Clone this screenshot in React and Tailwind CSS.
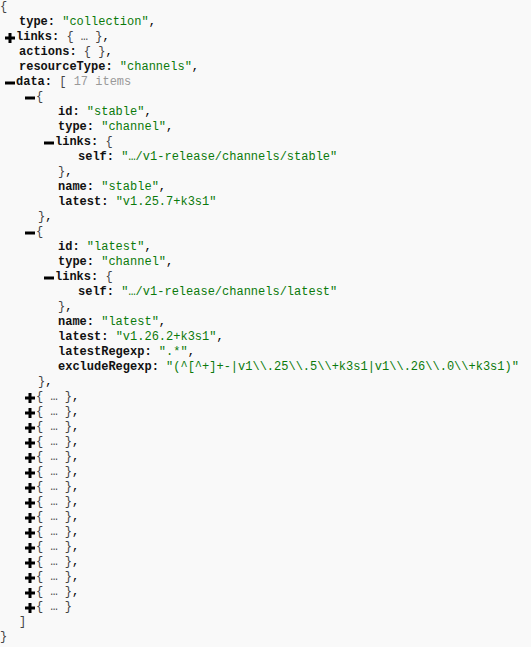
import React from 'react';

const Plus = () => (
  <svg width="10" height="10" viewBox="0 0 10 10" className="block">
    <rect x="0" y="3.5" width="10" height="3" fill="#000" />
    <rect x="3.5" y="0" width="3" height="10" fill="#000" />
  </svg>
);

const Minus = () => (
  <svg width="10" height="4" viewBox="0 0 10 4" className="block">
    <rect x="0" y="0.5" width="10" height="3" fill="#000" />
  </svg>
);

const Toggle = ({ open }) => (
  <span className="inline-flex h-[15px] w-[12px] items-center pl-px align-top">
    {open ? <Minus /> : <Plus />}
  </span>
);

const K = ({ children }) => <span className="font-bold text-[#111]">{children}: </span>;
const S = ({ children }) => <span className="text-[#0b7a0b]">"{children}"</span>;
const P = ({ children }) => <span className="text-[#444]">{children}</span>;

// indentation of each nesting level, in px
const pad = {
  0: 'pl-0',
  1: 'pl-[19px]',
  2: 'pl-[38px]',
  3: 'pl-[58px]',
  4: 'pl-[78px]',
};
// rows that start with a toggle sit a little to the left
const padToggle = {
  1: 'pl-[4px]',
  2: 'pl-[24px]',
  3: 'pl-[43px]',
};

const Line = ({ level, toggle, children }) => {
  if (toggle) {
    return (
      <div className={`h-[15px] ${padToggle[level]}`}>
        <Toggle open={toggle === '-'} />
        {children}
      </div>
    );
  }
  return <div className={`h-[15px] ${pad[level]}`}>{children}</div>;
};

const Collapsed = ({ last }) => (
  <Line level={2} toggle="+">
    <P>{'{ '}</P>
    <span className="text-[#444]">…</span>
    <P>{' }'}</P>
    {!last && <span className="text-black">,</span>}
  </Line>
);

const App = () => {
  const collapsed = Array.from({ length: 15 }, (_, i) => i);

  return (
    <div className="min-h-screen bg-[#f9f9f9] text-black">
      <div className="font-['Liberation_Mono','Courier_New',monospace] text-[12px] leading-[15px] whitespace-pre">
        <Line level={0}><P>{'{'}</P></Line>
        <Line level={1}><K>type</K><S>collection</S>,</Line>
        <Line level={1} toggle="+"><K>links</K><P>{'{ … }'}</P>,</Line>
        <Line level={1}><K>actions</K><P>{'{ }'}</P>,</Line>
        <Line level={1}><K>resourceType</K><S>channels</S>,</Line>
        <Line level={1} toggle="-">
          <K>data</K><P>{'[ '}</P><span className="text-[#999]">17 items</span>
        </Line>

        {/* first item */}
        <Line level={2} toggle="-"><P>{'{'}</P></Line>
        <Line level={3}><K>id</K><S>stable</S>,</Line>
        <Line level={3}><K>type</K><S>channel</S>,</Line>
        <Line level={3} toggle="-"><K>links</K><P>{'{'}</P></Line>
        <Line level={4}><K>self</K><S>…/v1-release/channels/stable</S></Line>
        <Line level={3}><P>{'}'}</P>,</Line>
        <Line level={3}><K>name</K><S>stable</S>,</Line>
        <Line level={3}><K>latest</K><S>v1.25.7+k3s1</S></Line>
        <Line level={2}><P>{'}'}</P>,</Line>

        {/* second item */}
        <Line level={2} toggle="-"><P>{'{'}</P></Line>
        <Line level={3}><K>id</K><S>latest</S>,</Line>
        <Line level={3}><K>type</K><S>channel</S>,</Line>
        <Line level={3} toggle="-"><K>links</K><P>{'{'}</P></Line>
        <Line level={4}><K>self</K><S>…/v1-release/channels/latest</S></Line>
        <Line level={3}><P>{'}'}</P>,</Line>
        <Line level={3}><K>name</K><S>latest</S>,</Line>
        <Line level={3}><K>latest</K><S>v1.26.2+k3s1</S>,</Line>
        <Line level={3}><K>latestRegexp</K><S>.*</S>,</Line>
        <Line level={3}>
          <K>excludeRegexp</K><S>{'(^[^+]+-|v1\\\\.25\\\\.5\\\\+k3s1|v1\\\\.26\\\\.0\\\\+k3s1)'}</S>
        </Line>
        <Line level={2}><P>{'}'}</P>,</Line>

        {collapsed.map((i) => (
          <Collapsed key={i} last={i === collapsed.length - 1} />
        ))}

        <Line level={1}><P>]</P></Line>
        <Line level={0}><P>{'}'}</P></Line>
      </div>
    </div>
  );
};

export default App;
